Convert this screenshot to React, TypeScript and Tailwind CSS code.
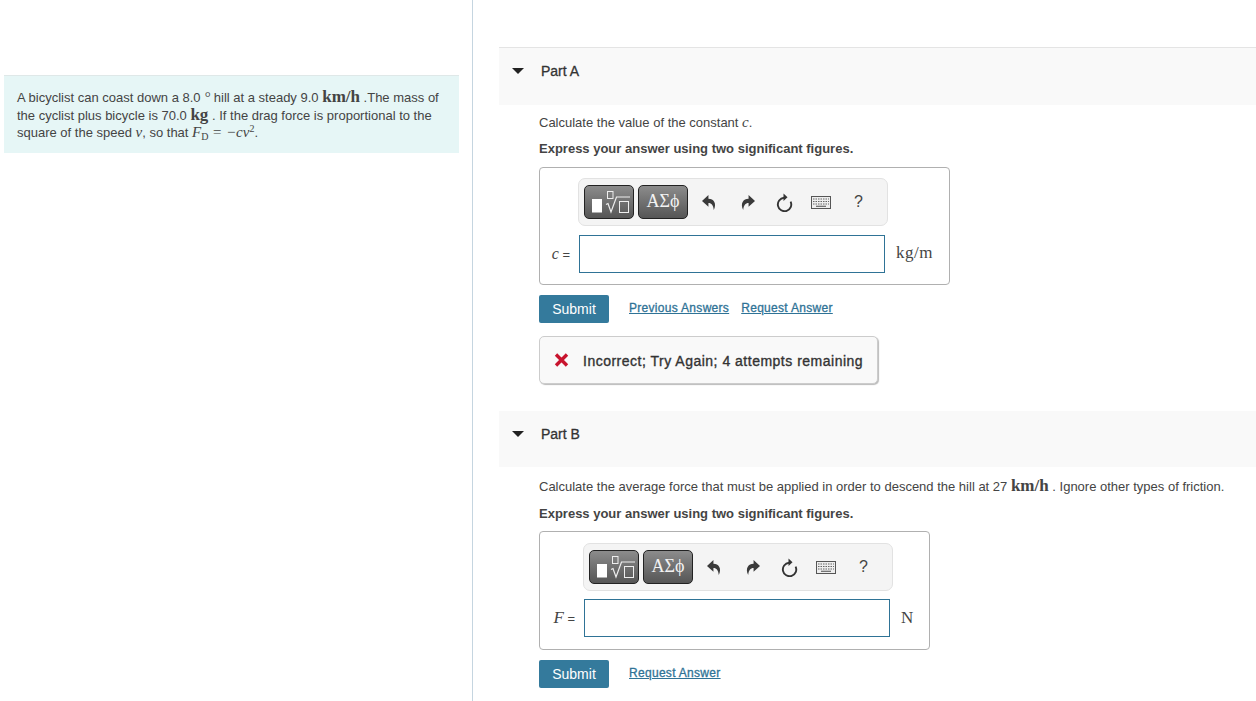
import React from 'react';

const sans = "font-['Liberation_Sans',Arial,sans-serif]";
const serif = "font-['Liberation_Serif','Times_New_Roman',serif]";

const M = ({ children, b }: { children: React.ReactNode; b?: boolean }) => (
  <span className={`${serif} leading-none ${b ? 'text-[17px] font-bold' : 'text-[15px] italic'}`}>{children}</span>
);

const UndoIcon = ({ flip }: { flip?: boolean }) => (
  <svg width="15" height="15" viewBox="0 0 14 14" className={flip ? '-scale-x-100' : ''}>
    <path d="M6 0 L0 5.5 L6 11 V7.5 C9 7.5 10.5 9.5 11 14 C14 8 11 3.5 6 3.5 Z" fill="#3a3a3a" />
  </svg>
);

const ReloadIcon = () => (
  <svg width="17" height="19" viewBox="0 0 17 19">
    <path d="M8 4.8 A6.7 6.7 0 1 0 14.6 8.6" fill="none" stroke="#333" strokeWidth="1.9" />
    <path d="M7.5 0.5 L11.5 4.2 L7.5 8 Z" fill="#333" />
  </svg>
);

const KeyboardIcon = () => (
  <svg width="20" height="13" viewBox="0 0 20 13">
    <rect x="0.5" y="0.5" width="19" height="12" fill="#eee" stroke="#555" />
    <path d="M2 3 H18 M2 5.5 H18" stroke="#666" strokeWidth="1.2" strokeDasharray="1.5 1" />
    <path d="M2 8 H18" stroke="#666" strokeWidth="1.2" strokeDasharray="1.5 1" />
    <path d="M5 10.3 H15" stroke="#666" strokeWidth="1.2" />
  </svg>
);

const TemplatesIcon = () => (
  <svg width="48" height="32" viewBox="0 0 48 32">
    <rect x="7" y="13" width="10" height="13.5" fill="#fff" />
    <rect x="22.5" y="5.5" width="5.5" height="7" fill="none" stroke="#eee" />
    <path d="M21 18.5 L23 17.5 L26 26 L31.5 11 H45" fill="none" stroke="#eee" strokeWidth="1.2" />
    <rect x="34.5" y="15.5" width="9" height="11" fill="none" stroke="#eee" />
  </svg>
);

const btn =
  'flex h-[34px] w-[50px] items-center justify-center rounded-[5px] border border-[#222] bg-linear-to-b from-[#8c8c8c] to-[#565656]';

const Toolbar = () => (
  <div className="flex h-[48px] w-[310px] items-center rounded-[7px] border border-[#e2e2e2] bg-[#f4f4f4] pl-[5px]">
    <div className={btn}>
      <TemplatesIcon />
    </div>
    <div className={`${btn} ml-[4px] pb-[2px] text-[18px] text-[#f2f2f2] ${serif}`}>ΑΣϕ</div>
    <div className="ml-[14px] flex w-[15px] justify-center"><UndoIcon /></div>
    <div className="ml-[23px] flex w-[15px] justify-center"><UndoIcon flip /></div>
    <div className="ml-[21px] flex w-[17px] justify-center"><ReloadIcon /></div>
    <div className="ml-[18px] flex w-[20px] justify-center"><KeyboardIcon /></div>
    <div className={`ml-[23px] mb-[1px] text-[16px] leading-none text-[#444] ${sans}`}>?</div>
  </div>
);

const AnswerA = () => (
  <div className="mt-[10px] w-[411px] rounded-[4px] border border-[#b0b0b0] pb-[11px] pt-[10px]">
    <div className="pl-[38px]">
      <Toolbar />
    </div>
    <div className="mt-[9px] flex items-center">
      <div className="w-[39px] pr-[9px] text-right text-[13px] text-[#444]">
        <span className={`${serif} text-[16px] italic`}>c</span> =
      </div>
      <div className="h-[38px] w-[306px] border border-[#2f7396] bg-white" />
      <div className={`mb-[2px] ml-[11px] text-[17px] tracking-[0.5px] text-[#444] ${serif}`}>kg/m</div>
    </div>
  </div>
);

const AnswerB = () => (
  <div className="mt-[9px] w-[391px] rounded-[4px] border border-[#b0b0b0] pb-[12px] pt-[11px]">
    <div className="pl-[43px]">
      <Toolbar />
    </div>
    <div className="mt-[8px] flex items-center">
      <div className="w-[44px] pr-[9px] text-right text-[13px] text-[#444]">
        <span className={`${serif} text-[17px] italic`}>F</span> =
      </div>
      <div className="h-[38px] w-[306px] border border-[#2f7396] bg-white" />
      <div className={`ml-[11px] text-[17px] text-[#444] ${serif}`}>N</div>
    </div>
  </div>
);

const Submit = () => (
  <div className="flex h-[28px] w-[70px] items-center justify-center rounded-[2px] bg-[#347a9c] text-[14px] text-white">
    Submit
  </div>
);

const Lnk = ({ children, cls }: { children: React.ReactNode; cls?: string }) => (
  <span className={`text-[12px] font-medium tracking-[0.3px] text-[#2f7396] underline [-webkit-text-stroke:0.3px_#2f7396] ${cls ?? ''}`}>
    {children}
  </span>
);

const PartHeader = ({ title, h }: { title: string; h: string }) => (
  <div className={`flex items-start bg-[#f9f9f9] ${h}`}>
    <svg width="12" height="6" viewBox="0 0 12 6" className="ml-[13px] mt-[20px]">
      <path d="M0 0 H12 L6 6 Z" fill="#222" />
    </svg>
    <div className="ml-[17px] mt-[15px] text-[14px] leading-[17px] text-[#333] [-webkit-text-stroke:0.3px_#333]">
      {title}
    </div>
  </div>
);

export default function App() {
  return (
    <div className={`flex h-[701px] overflow-hidden bg-white text-[#444] ${sans}`}>
      {/* problem intro */}
      <div className="w-[473px] shrink-0 border-r border-[#c5d5e0] pl-[4px] pr-[13px] pt-[75px]">
        <div className="h-[78px] border-t border-[#dfe8e8] bg-[#e6f6f6] pl-[13px] pr-[10px] pt-[12px] text-[13px] leading-[17px] whitespace-nowrap">
          <div>A bicyclist can coast down a 8.0 <M>°</M> hill at a steady 9.0 <M b>km/h</M> .The mass of</div>
          <div>the cyclist plus bicycle is 70.0 <M b>kg</M> . If the drag force is proportional to the</div>
          <div>
            square of the speed <M>v</M>, so that <M>F</M><sub className={`${serif} text-[10px]`}>D</sub> <M>= −cv</M>
            <sup className={`${serif} text-[10px]`}>2</sup>.
          </div>
        </div>
      </div>

      <div className="min-w-0 flex-1 pl-[26px] pt-[47px]">
        {/* part A */}
        <div className="border-t border-[#e4e4e4]">
          <PartHeader title="Part A" h="h-[57px]" />
        </div>
        <div className="pl-[40px]">
          <div className="mt-[9px] text-[13px] leading-[17px]">
            Calculate the value of the constant <M>c</M>.
          </div>
          <div className="mt-[9px] text-[13px] font-bold leading-[17px]">Express your answer using two significant figures.</div>
          <AnswerA />
          <div className="mt-[10px] flex items-start">
            <Submit />
            <Lnk cls="ml-[20px] mt-[4px]">Previous Answers</Lnk>
            <Lnk cls="ml-[12px] mt-[4px]">Request Answer</Lnk>
          </div>
          <div className="mt-[13px] flex h-[48px] w-[339px] items-center rounded-[5px] border border-[#ccc] bg-[#f9f9f9] pl-[14px] shadow-[1px_1px_1px_#bbb]">
            <svg width="15" height="14" viewBox="0 0 15 14">
              <path d="M2 1.5 L13 12.5 M13 1.5 L2 12.5" stroke="#c8142e" strokeWidth="3.4" />
            </svg>
            <span className="ml-[14px] mt-[2px] text-[14px] leading-none tracking-[0.5px] text-[#333] [-webkit-text-stroke:0.35px_#333]">
              Incorrect; Try Again; 4 attempts remaining
            </span>
          </div>
        </div>

        {/* part B */}
        <div className="mt-[27px]">
          <PartHeader title="Part B" h="h-[56px]" />
        </div>
        <div className="pl-[40px]">
          <div className="mt-[10px] whitespace-nowrap text-[13px] leading-[19px]">
            Calculate the average force that must be applied in order to descend the hill at 27 <M b>km/h</M> . Ignore other types of friction.
          </div>
          <div className="mt-[9px] text-[13px] font-bold leading-[17px]">Express your answer using two significant figures.</div>
          <AnswerB />
          <div className="mt-[10px] flex items-start">
            <Submit />
            <Lnk cls="ml-[20px] mt-[4px]">Request Answer</Lnk>
          </div>
        </div>
      </div>
    </div>
  );
}
